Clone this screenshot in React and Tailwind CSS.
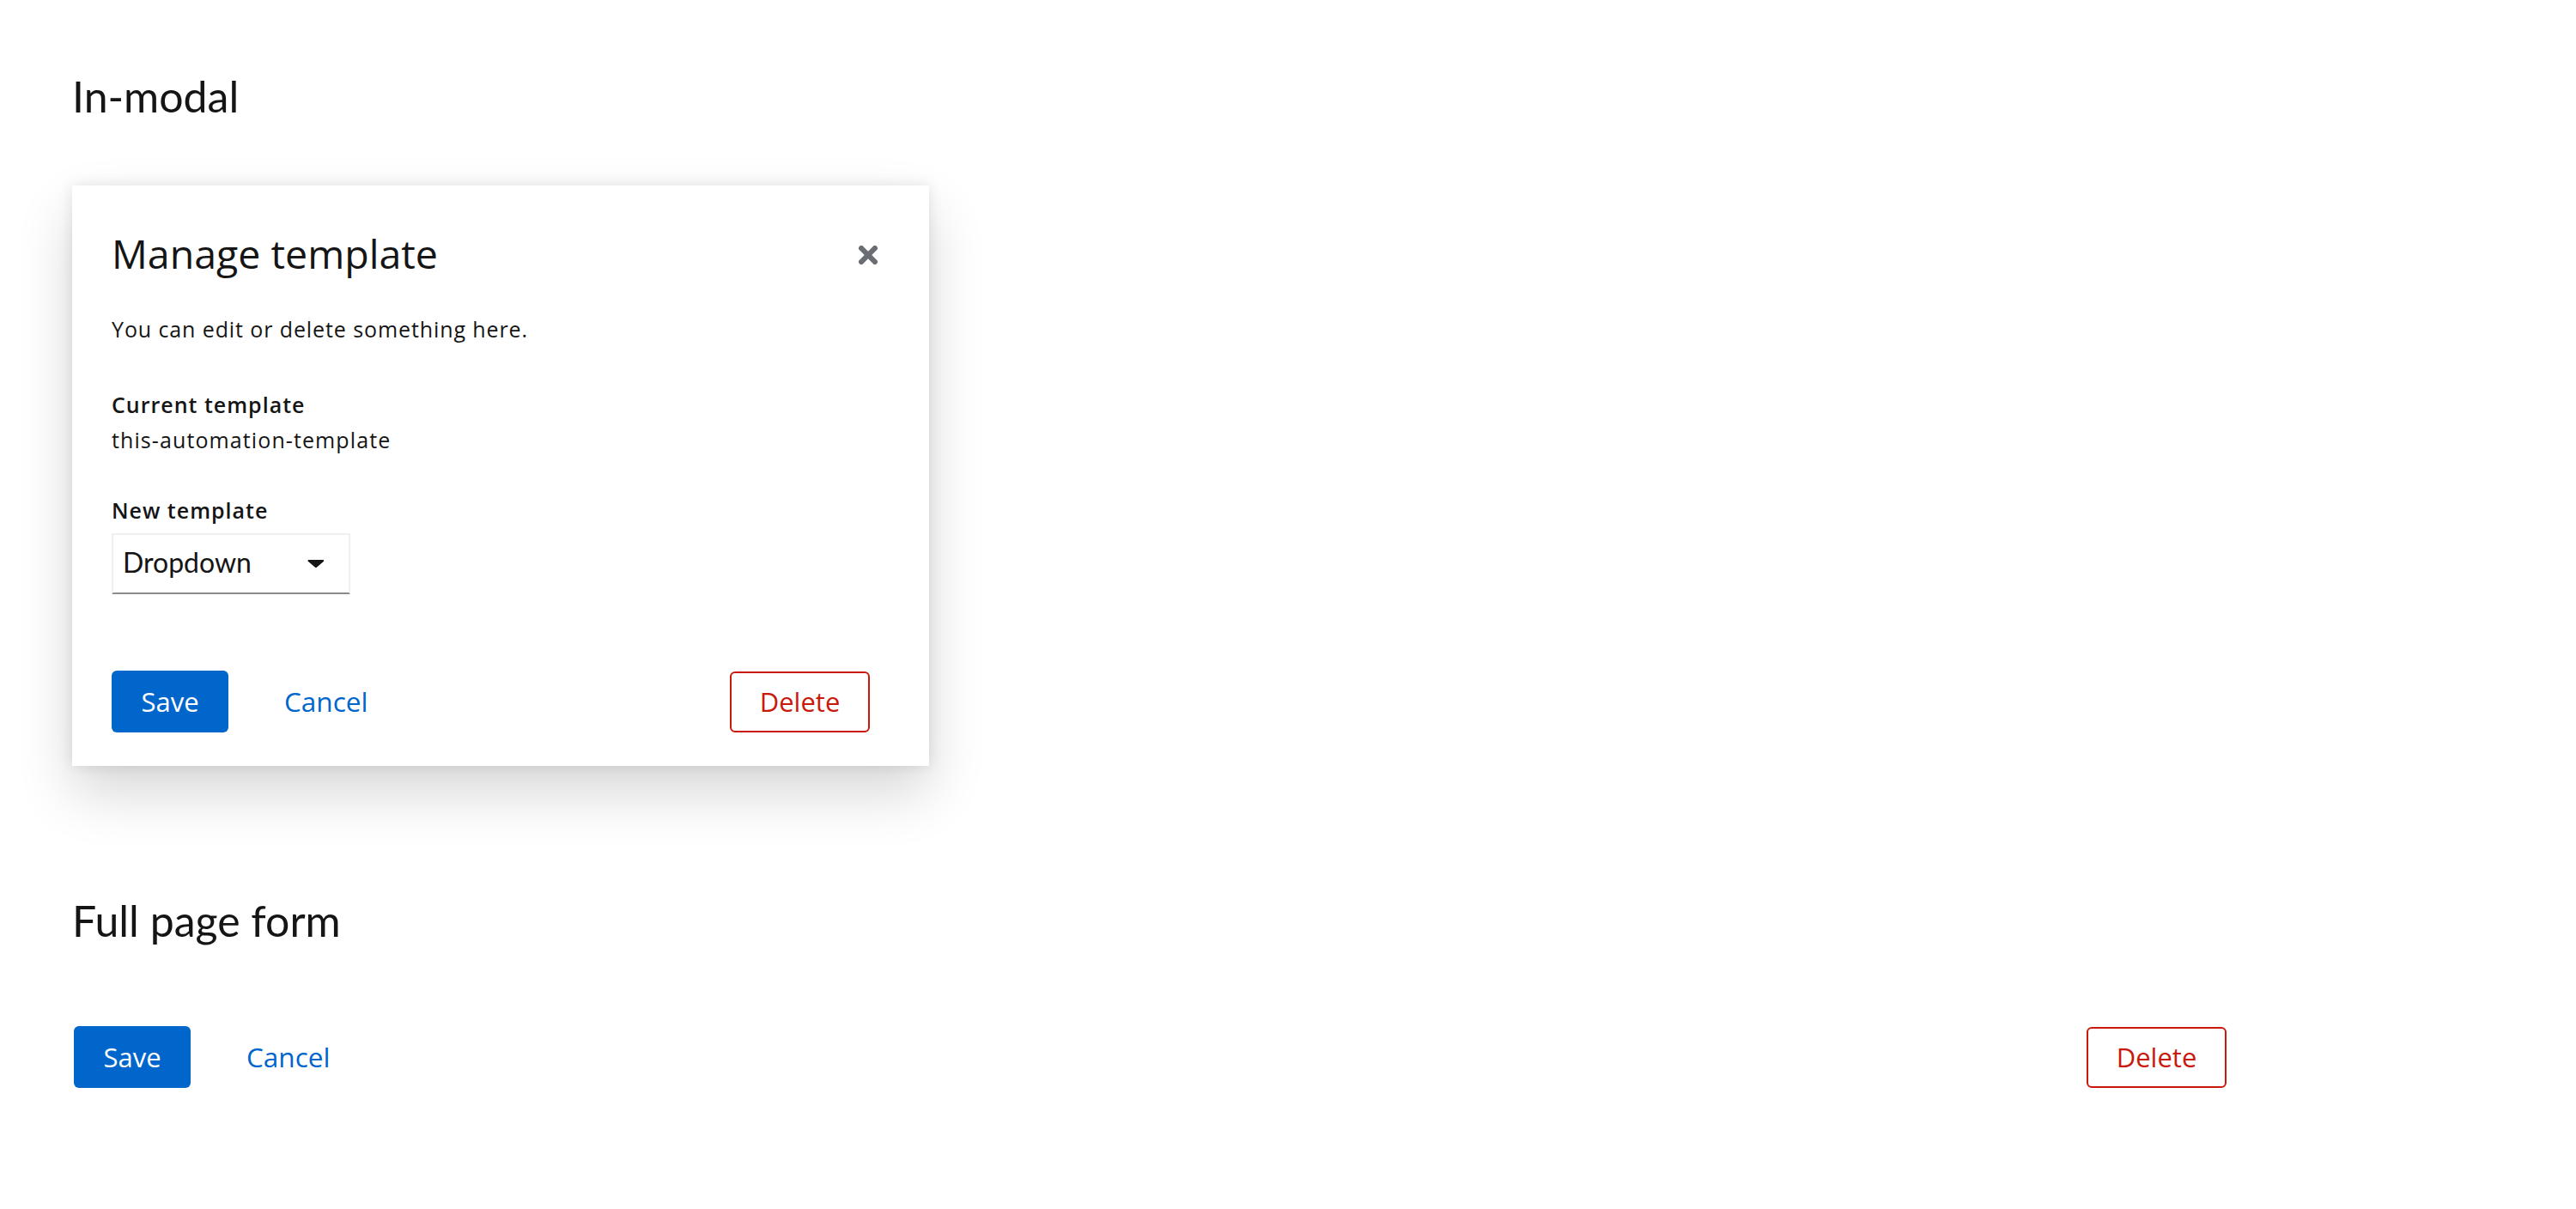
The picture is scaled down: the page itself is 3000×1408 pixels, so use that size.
import React from "react";

function TimesIcon() {
  return (
    <svg width="22" height="22" viewBox="5 85 342 342" fill="#6a6e73" aria-hidden="true">
      <path d="M242.72 256l100.07-100.07c12.28-12.28 12.28-32.19 0-44.48l-22.24-22.24c-12.28-12.28-32.19-12.28-44.48 0L176 189.28 75.93 89.21c-12.28-12.28-32.19-12.28-44.48 0L9.21 111.45c-12.28 12.28-12.28 32.19 0 44.48L109.28 256 9.21 356.07c-12.28 12.28-12.28 32.19 0 44.48l22.24 22.24c12.28 12.28 32.2 12.28 44.48 0L176 322.72l100.07 100.07c12.28 12.28 32.2 12.28 44.48 0l22.24-22.24c12.28-12.28 12.28-32.19 0-44.48L242.72 256z" />
    </svg>
  );
}

function CaretDown() {
  return (
    <svg width="19" height="9" viewBox="4 192 299 169" preserveAspectRatio="none" fill="#151515" aria-hidden="true">
      <path d="M31.3 192h257.3c17.8 0 26.7 21.5 14.1 34.1L174.1 354.8c-7.8 7.8-20.5 7.8-28.3 0L17.2 226.1C4.6 213.5 13.5 192 31.3 192z" />
    </svg>
  );
}

const OPEN = { fontFamily: "'Open Sans', 'Noto Sans', sans-serif" };

function Buttons({ width }) {
  return (
    <div className="flex items-center justify-between" style={width ? { ...OPEN, width } : OPEN}>
      <div className="flex items-center">
        <button className="w-[136px] h-[72px] rounded-[6px] bg-[#0066cc] text-white text-[31px] leading-[40px]">
          Save
        </button>
        <button className="ml-[34px] px-[31px] h-[72px] text-[#0066cc] text-[31.5px] leading-[40px]">
          Cancel
        </button>
      </div>
      <button className="w-[163px] h-[71px] rounded-[6px] border-2 border-[#c9190b] text-[#c9190b] text-[31px] leading-[40px]">
        Delete
      </button>
    </div>
  );
}

export default function App() {
  return (
    <div
      className="min-h-[1408px] w-[3000px] bg-white text-[#151515] pl-[84px] pt-[82px]"
      style={{ fontFamily: "Lato, 'Open Sans', sans-serif" }}
    >
      <h2 className="text-[50px] leading-[60px] font-normal">In-modal</h2>

      <div className="mt-[74px] w-[998px] bg-white pl-[46px] pr-[60px] pt-[51px] pb-[39px] shadow-[0_31px_61px_0_rgba(3,3,3,0.16),0_0_15px_0_rgba(3,3,3,0.1)]">
        <div className="flex items-start justify-between" style={OPEN}>
          <h1 className="text-[46.5px] leading-[56px] font-normal">Manage template</h1>
          <div className="mt-[19px]">
            <TimesIcon />
          </div>
        </div>

        <div style={OPEN}>
          <p className="mt-[41px] text-[25px] leading-[38px] tracking-[0.9px]">You can edit or delete something here.</p>

          <div className="mt-[49px] text-[25px] leading-[40px] font-semibold tracking-[1px]">Current template</div>
          <div className="mt-[1px] text-[25px] leading-[40px] tracking-[1.1px]">this-automation-template</div>

          <div className="mt-[42px] text-[25px] leading-[40px] font-semibold tracking-[1px]">New template</div>
        </div>

        <div className="mt-[7px] w-[278px] h-[71px] flex items-center justify-between border-2 border-[#f0f0f0] border-b-[#8a8d90] pl-[11px] pr-[29px] pb-[4px]">
          <span className="text-[32px] leading-[38px]">Dropdown</span>
          <span className="mt-[4px]">
            <CaretDown />
          </span>
        </div>

        <div className="mt-[89px] mr-[9px]">
          <Buttons />
        </div>
      </div>

      <h2 className="mt-[150px] text-[50px] leading-[60px] font-normal">Full page form</h2>

      <div className="mt-[93px] ml-[2px]">
        <Buttons width={2507} />
      </div>
    </div>
  );
}
